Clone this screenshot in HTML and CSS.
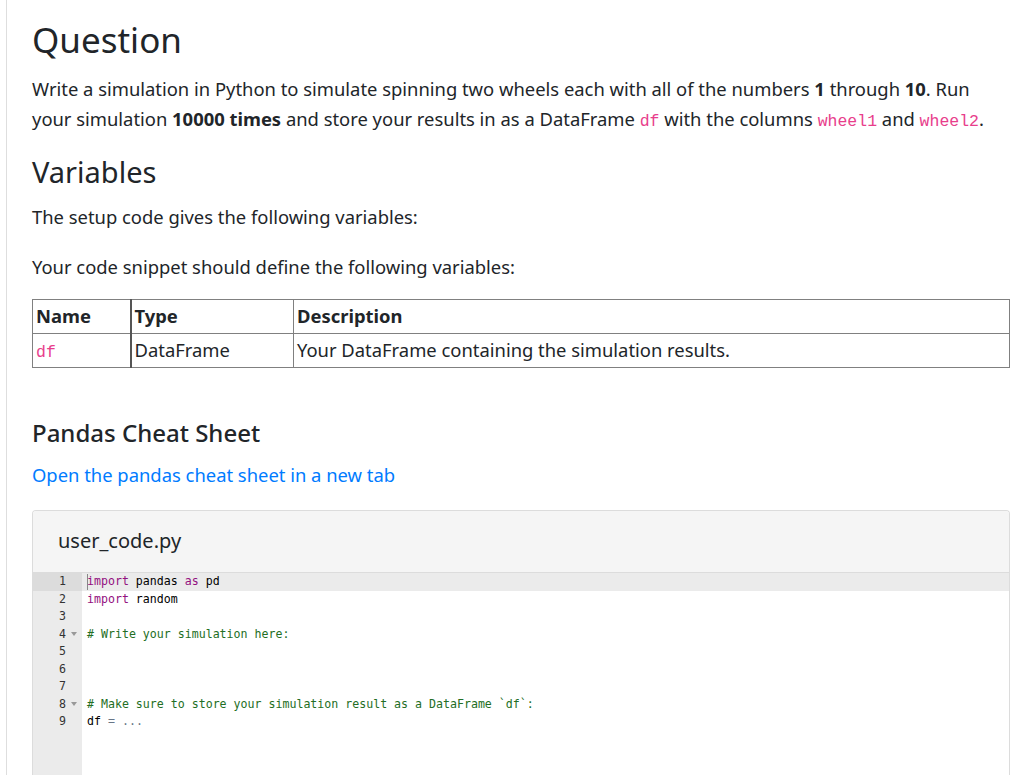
FILE: index.html
```html
<!DOCTYPE html>
<html lang="en">
<head>
<meta charset="utf-8">
<title>Question</title>
<link rel="stylesheet" href="styles.css">
</head>
<body>
<div class="page">
  <h1 class="title">Question</h1>
  <p class="text">Write a simulation in Python to simulate spinning two wheels each with all of the numbers <b>1</b> through <b>10</b>. Run your simulation <b>10000 times</b> and store your results in as a DataFrame <code>df</code> with the columns <code>wheel1</code> and <code>wheel2</code>.</p>

  <h2 class="sub">Variables</h2>
  <p class="text">The setup code gives the following variables:</p>
  <p class="text last">Your code snippet should define the following variables:</p>

  <table class="vars">
    <colgroup>
      <col class="col-name">
      <col class="col-type">
      <col>
    </colgroup>
    <thead>
      <tr><th>Name</th><th class="c-type">Type</th><th>Description</th></tr>
    </thead>
    <tbody>
      <tr><td><code>df</code></td><td class="c-type">DataFrame</td><td>Your DataFrame containing the simulation results.</td></tr>
    </tbody>
  </table>

  <h3 class="cheat">Pandas Cheat Sheet</h3>
  <p class="text"><a class="link" href="#">Open the pandas cheat sheet in a new tab</a></p>

  <div class="card">
    <div class="card-head">user_code.py</div>
    <div class="editor">
      <div class="gutter">
        <div class="gl active">1</div>
        <div class="gl">2</div>
        <div class="gl">3</div>
        <div class="gl fold">4</div>
        <div class="gl">5</div>
        <div class="gl">6</div>
        <div class="gl">7</div>
        <div class="gl fold">8</div>
        <div class="gl">9</div>
      </div>
      <div class="code">
        <div class="ln active"><span class="cursor"></span><span class="kw">import</span> pandas <span class="kw">as</span> pd</div>
        <div class="ln"><span class="kw">import</span> random</div>
        <div class="ln"></div>
        <div class="ln"><span class="cm"># Write your simulation here:</span></div>
        <div class="ln"></div>
        <div class="ln"></div>
        <div class="ln"></div>
        <div class="ln"><span class="cm"># Make sure to store your simulation result as a DataFrame `df`:</span></div>
        <div class="ln">df <span class="op">=</span> <span class="op">...</span></div>
      </div>
    </div>
  </div>
</div>
</body>
</html>
```
FILE: styles.css
```css
html, body {
  margin: 0;
  padding: 0;
  background: #fff;
}
body {
  font-family: "Noto Sans", "Open Sans", sans-serif;
  color: #212529;
  font-size: 18.4px;
  line-height: 30px;
}
.page {
  margin-left: 6px;
  border-left: 1px solid #dedede;
  padding: 18px 14px 0 25px;
  min-height: 775px;
  box-sizing: border-box;
}
.title {
  font-size: 35px;
  font-weight: 400;
  line-height: 44px;
  margin: 0 0 12px 0;
}
.text {
  margin: 0 0 20px 0;
}
.text.last {
  margin-bottom: 17px;
}
.text b {
  font-weight: 700;
}
code {
  font-family: "Liberation Mono", "DejaVu Sans Mono", monospace;
  font-size: 16.5px;
  line-height: 1;
  color: #e83e8c;
}
.sub {
  font-size: 29px;
  font-weight: 400;
  line-height: 36px;
  margin: 0 0 12px 0;
}
.vars {
  width: 100%;
  border-collapse: collapse;
  table-layout: fixed;
  margin: 0 0 50px 0;
}
.col-name {
  width: 98px;
}
.col-type {
  width: 163px;
}
.vars th, .vars td {
  border: 1px solid #808080;
  text-align: left;
  padding: 0 3px 1px 3px;
  vertical-align: middle;
  height: 34px;
  box-sizing: border-box;
}
.vars th {
  font-weight: 700;
}
.vars .c-type {
  border-left: 2px solid #555;
}
.cheat {
  font-size: 24px;
  font-weight: 500;
  line-height: 30px;
  margin: 0 0 12px 0;
}
.link {
  color: #007bff;
  text-decoration: none;
}
.card {
  margin-top: 0;
  border: 1px solid #dcdcdc;
  border-bottom: none;
  border-radius: 4px 4px 0 0;
  overflow: hidden;
}
.card-head {
  background: #f5f5f5;
  border-bottom: 1px solid #dcdcdc;
  padding: 15px 25px 16px 25px;
  font-size: 20px;
  line-height: 30px;
}
.editor {
  display: flex;
  font-family: "DejaVu Sans Mono", "Liberation Mono", monospace;
  font-size: 11.6px;
  line-height: 17.5px;
  min-height: 220px;
}
.gutter {
  width: 49px;
  flex: none;
  background: #ebebeb;
  color: #333;
  padding-bottom: 60px;
}
.gl {
  position: relative;
  text-align: right;
  padding-right: 16px;
  height: 17.5px;
}
.gl.active {
  background: #dcdcdc;
}
.gl.fold::after {
  content: "";
  position: absolute;
  right: 5px;
  top: 6px;
  border-left: 3px solid transparent;
  border-right: 3px solid transparent;
  border-top: 4px solid #999;
}
.code {
  flex: 1;
  color: #000;
}
.ln {
  position: relative;
  height: 17.5px;
  padding-left: 5px;
  white-space: pre;
}
.ln.active {
  background: #ebebeb;
}
.cursor {
  position: absolute;
  left: 5px;
  top: 1px;
  width: 1px;
  height: 16px;
  background: #888;
}
.kw {
  color: #930f80;
}
.cm {
  color: #236e24;
}
.op {
  color: #687687;
}
```
